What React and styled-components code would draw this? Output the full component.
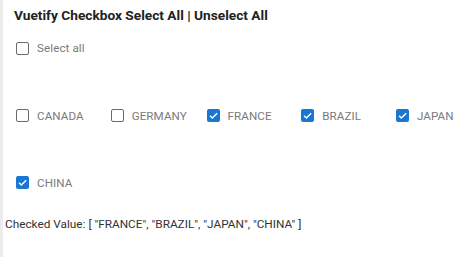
import React, { useState } from "react";
import styled, { createGlobalStyle } from "styled-components";

const Global = createGlobalStyle`
  html, body { margin: 0; padding: 0; background: #fff; }
  body { font-family: Roboto, "Liberation Sans", sans-serif; }
`;

const Page = styled.div`
  min-height: 257px;
  border-left: 3px solid #ececec;
  box-sizing: border-box;
`;

const Container = styled.div`
  padding: 0 0 0 11px;
`;

const Title = styled.h3`
  margin: 0;
  padding-top: 6px;
  height: 18px;
  line-height: 18px;
  font-size: 13.7px;
  font-weight: 700;
  color: #222;
`;

const Row = styled.div`
  display: flex;
  flex-wrap: wrap;
  column-gap: 17.7px;
  margin-top: ${(p) => p.$mt || 0}px;
`;

const Item = styled.label`
  display: flex;
  align-items: center;
  height: ${(p) => p.$h}px;
  ${(p) => (p.$w ? `flex: 0 0 ${p.$w}px;` : "")}
  white-space: nowrap;
  cursor: pointer;
  padding-left: 2px;
  box-sizing: border-box;
`;

const Box = styled.span`
  box-sizing: border-box;
  width: 13px;
  height: 13px;
  border-radius: 2px;
  border: ${(p) => (p.$checked ? "none" : "1.6px solid #6b6b6b")};
  background: ${(p) => (p.$checked ? "#1976d2" : "transparent")};
  display: inline-flex;
  align-items: center;
  justify-content: center;
  margin-right: 8px;
  flex-shrink: 0;
`;

const Label = styled.span`
  font-size: 11.6px;
  color: #7a7a7a;
  letter-spacing: 0.1px;
`;

const Output = styled.div`
  padding-left: 2px;
  font-size: 11.8px;
  color: #333;
  line-height: 16px;
  margin-top: 0;
`;

const Check = () => (
  <svg width="11" height="11" viewBox="0 0 24 24">
    <path d="M4.5 12.5l5 5L20 7" fill="none" stroke="#fff" strokeWidth="3.2" />
  </svg>
);

const Checkbox = ({ checked, label, h, w, onToggle }) => (
  <Item $h={h} $w={w} onClick={onToggle}>
    <Box $checked={checked}>{checked && <Check />}</Box>
    <Label>{label}</Label>
  </Item>
);

const COUNTRIES = ["CANADA", "GERMANY", "FRANCE", "BRAZIL", "JAPAN", "CHINA"];

export default function App() {
  const [checked, setChecked] = useState(["FRANCE", "BRAZIL", "JAPAN", "CHINA"]);
  const toggle = (c) =>
    setChecked((prev) => (prev.includes(c) ? prev.filter((x) => x !== c) : [...prev, c]));
  const all = checked.length === COUNTRIES.length;
  return (
    <Page>
      <Global />
      <Container>
        <Title>Vuetify Checkbox Select All | Unselect All</Title>
        <Checkbox
          h={48}
          label="Select all"
          checked={all}
          onToggle={() => setChecked(all ? [] : [...COUNTRIES])}
        />
        <Row $mt={10}>
          {COUNTRIES.map((c) => (
            <Checkbox
              key={c}
              h={67}
              w={77}
              label={c}
              checked={checked.includes(c)}
              onToggle={() => toggle(c)}
            />
          ))}
        </Row>
      </Container>
      <Output>Checked Value: [ {checked.map((c) => `"${c}"`).join(", ")} ]</Output>
    </Page>
  );
}
